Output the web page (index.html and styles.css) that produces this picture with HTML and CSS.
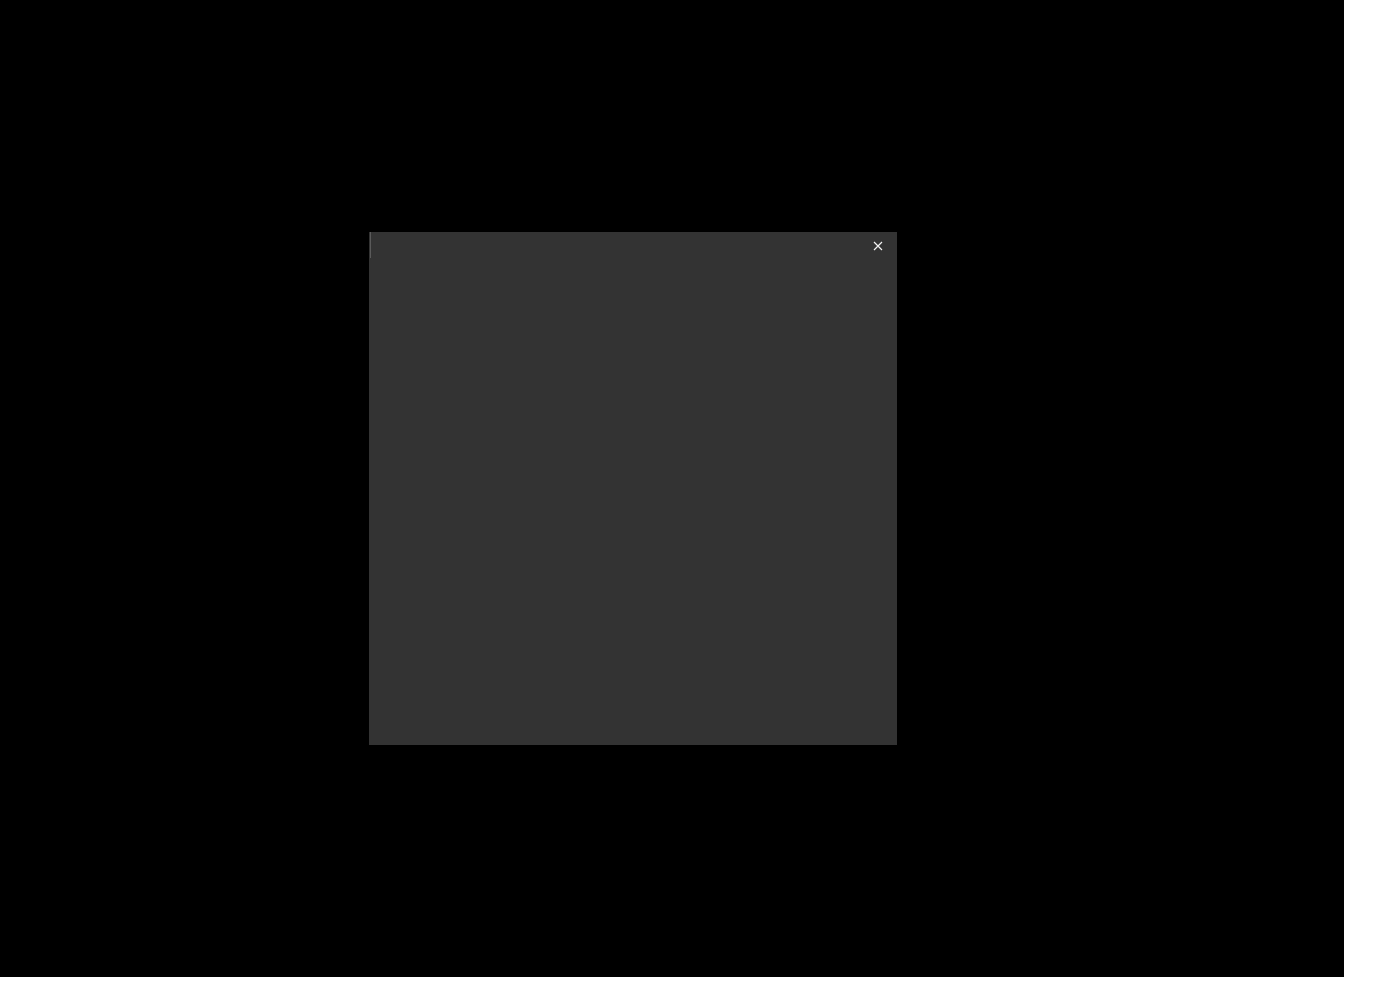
FILE: index.html
```html
<!DOCTYPE html>
<html lang="en">
<head>
<meta charset="utf-8">
<title>Dialog</title>
<link rel="stylesheet" href="styles.css">
</head>
<body>
<div class="overlay">
  <div class="modal" role="dialog">
    <div class="caret"></div>
    <button class="close" aria-label="Close">
      <svg width="10" height="10" viewBox="0 0 10 10"><path d="M1 1L9 9M9 1L1 9" stroke="#f2f2f2" stroke-width="1.2" fill="none"/></svg>
    </button>
  </div>
</div>
</body>
</html>
```
FILE: styles.css
```css
html, body {
  margin: 0;
  padding: 0;
  background: #fff;
  font-family: "Liberation Sans", Arial, sans-serif;
}
.overlay {
  width: 1344px;
  height: 977px;
  background: #000;
  display: flex;
  align-items: center;
  padding-left: 369px;
  box-sizing: border-box;
}
.modal {
  position: relative;
  width: 528px;
  height: 513px;
  background: #333333;
}
.caret {
  width: 1px;
  height: 26px;
  background: #5a5a5a;
  margin-left: 1px;
}
.close {
  position: absolute;
  top: 8px;
  right: 13px;
  width: 12px;
  height: 12px;
  padding: 0;
  border: 0;
  background: transparent;
  display: flex;
  align-items: center;
  justify-content: center;
  cursor: pointer;
}
```
